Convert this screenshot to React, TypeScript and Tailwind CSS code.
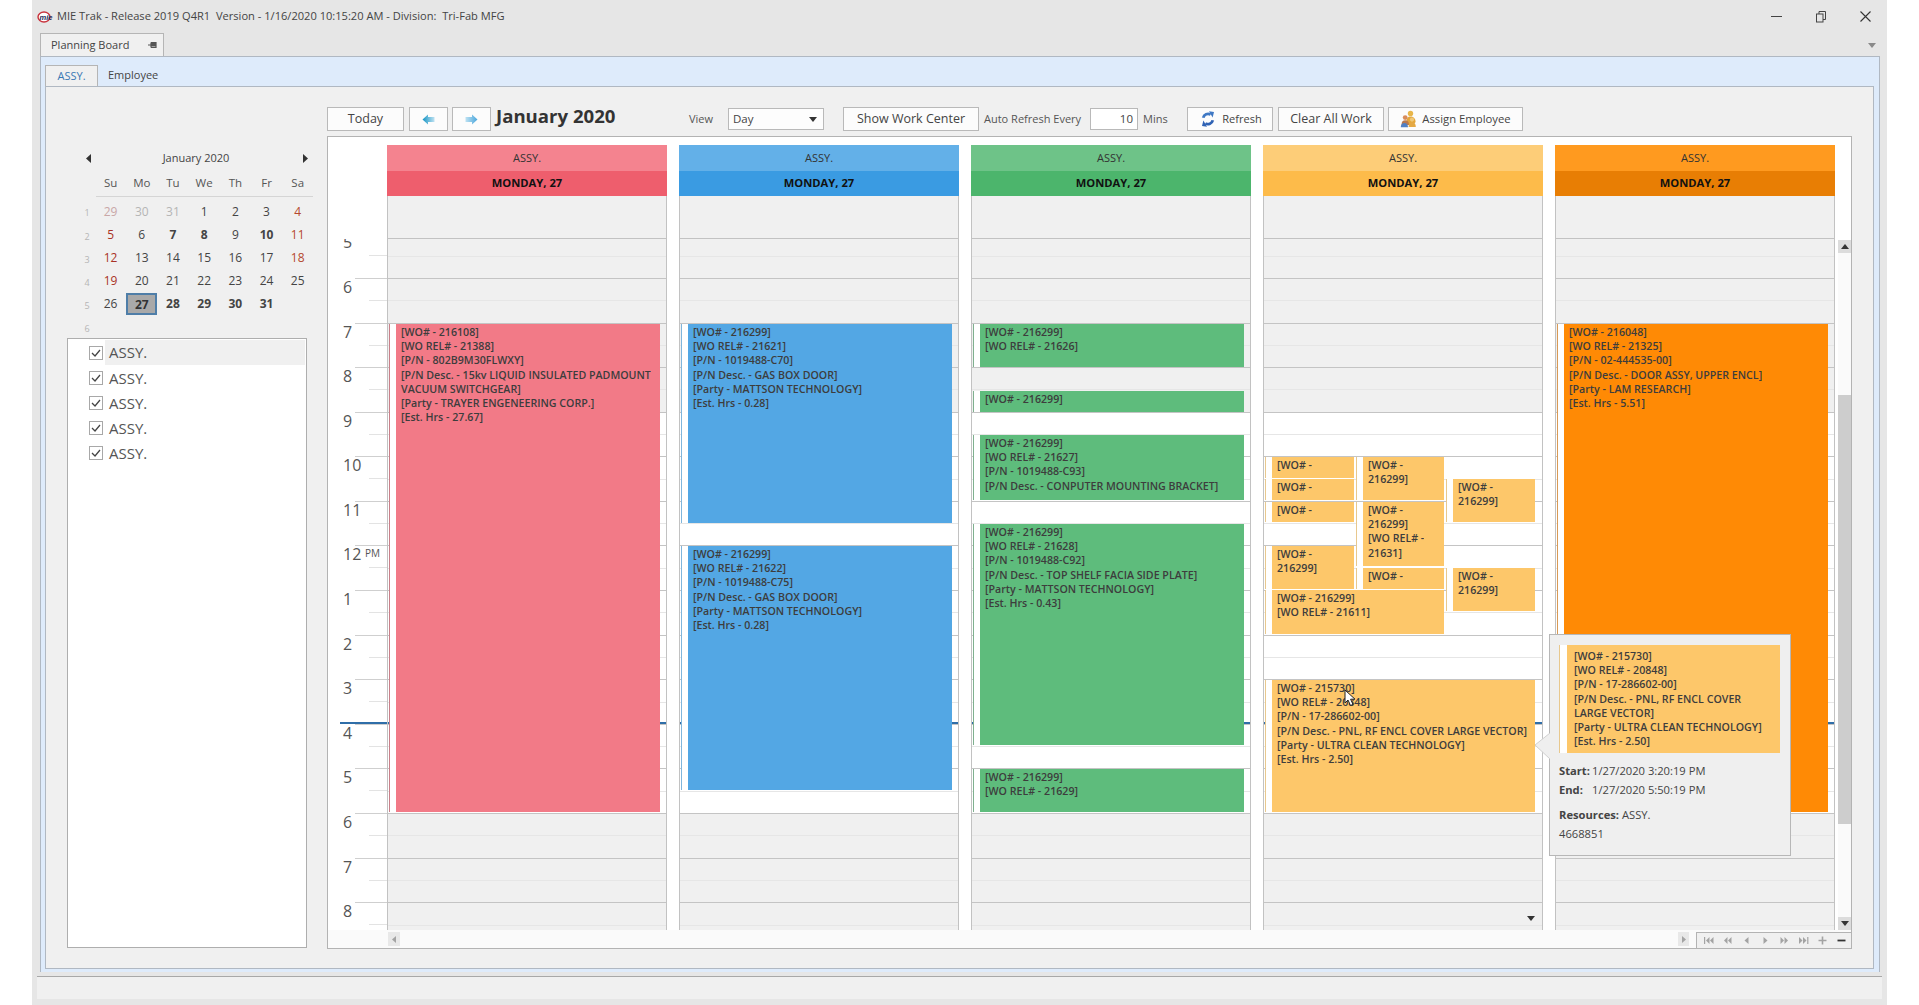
import type { ReactNode } from "react";

const ORIGIN = 239; // top of the scrolling day grid, as the events count it
const FONT = "font-['Open_Sans',sans-serif]";

type Ev = { y1: number; y2: number; x1?: number; x2?: number; lines: string[] };

const COLS: { light: string; dark: string; ev: string; strip: string; x2: number; events: Ev[] }[] = [
  {
    light: "bg-[#f4838f]",
    dark: "bg-[#ee5e6d]",
    ev: "bg-[#f27a87]",
    strip: "border-[#c9808a]",
    x2: 272,
    events: [
      {
        y1: 324,
        y2: 812,
        lines: [
          "[WO# - 216108]",
          "[WO REL# - 21388]",
          "[P/N - 802B9M30FLWXY]",
          "[P/N Desc. - 15kv LIQUID INSULATED PADMOUNT",
          "VACUUM SWITCHGEAR]",
          "[Party - TRAYER ENGENEERING CORP.]",
          "[Est. Hrs - 27.67]",
        ],
      },
    ],
  },
  {
    light: "bg-[#63b0e8]",
    dark: "bg-[#3a9be2]",
    ev: "bg-[#53a7e4]",
    strip: "border-[#7fb5dc]",
    x2: 272,
    events: [
      {
        y1: 324,
        y2: 523,
        lines: ["[WO# - 216299]", "[WO REL# - 21621]", "[P/N - 1019488-C70]", "[P/N Desc. - GAS BOX DOOR]", "[Party - MATTSON TECHNOLOGY]", "[Est. Hrs - 0.28]"],
      },
      {
        y1: 546,
        y2: 790,
        lines: ["[WO# - 216299]", "[WO REL# - 21622]", "[P/N - 1019488-C75]", "[P/N Desc. - GAS BOX DOOR]", "[Party - MATTSON TECHNOLOGY]", "[Est. Hrs - 0.28]"],
      },
    ],
  },
  {
    light: "bg-[#6ec388]",
    dark: "bg-[#4cb56c]",
    ev: "bg-[#5ebc7c]",
    strip: "border-[#7fb08f]",
    x2: 272,
    events: [
      { y1: 324, y2: 367, lines: ["[WO# - 216299]", "[WO REL# - 21626]"] },
      { y1: 391, y2: 412, lines: ["[WO# - 216299]"] },
      { y1: 435, y2: 500, lines: ["[WO# - 216299]", "[WO REL# - 21627]", "[P/N - 1019488-C93]", "[P/N Desc. - CONPUTER MOUNTING BRACKET]"] },
      {
        y1: 524,
        y2: 745,
        lines: ["[WO# - 216299]", "[WO REL# - 21628]", "[P/N - 1019488-C92]", "[P/N Desc. - TOP SHELF FACIA SIDE PLATE]", "[Party - MATTSON TECHNOLOGY]", "[Est. Hrs - 0.43]"],
      },
      { y1: 769, y2: 812, lines: ["[WO# - 216299]", "[WO REL# - 21629]"] },
    ],
  },
  {
    light: "bg-[#fdcd78]",
    dark: "bg-[#fdbb4a]",
    ev: "bg-[#fdc76a]",
    strip: "border-[#e8c88e]",
    x2: 271,
    events: [
      { y1: 457, y2: 478, x1: 1, x2: 90, lines: ["[WO# -"] },
      { y1: 479, y2: 500, x1: 1, x2: 90, lines: ["[WO# -"] },
      { y1: 502, y2: 522, x1: 1, x2: 90, lines: ["[WO# -"] },
      { y1: 546, y2: 589, x1: 1, x2: 90, lines: ["[WO# -", "216299]"] },
      { y1: 457, y2: 500, x1: 92, x2: 180, lines: ["[WO# -", "216299]"] },
      { y1: 502, y2: 566, x1: 92, x2: 180, lines: ["[WO# -", "216299]", "[WO REL# -", "21631]"] },
      { y1: 568, y2: 589, x1: 92, x2: 180, lines: ["[WO# -"] },
      { y1: 479, y2: 522, x1: 182, x2: 271, lines: ["[WO# -", "216299]"] },
      { y1: 568, y2: 611, x1: 182, x2: 271, lines: ["[WO# -", "216299]"] },
      { y1: 590, y2: 634, x1: 1, x2: 180, lines: ["[WO# - 216299]", "[WO REL# - 21611]"] },
      {
        y1: 680,
        y2: 812,
        lines: ["[WO# - 215730]", "[WO REL# - 20848]", "[P/N - 17-286602-00]", "[P/N Desc. - PNL, RF ENCL COVER LARGE VECTOR]", "[Party - ULTRA CLEAN TECHNOLOGY]", "[Est. Hrs - 2.50]"],
      },
    ],
  },
  {
    light: "bg-[#ff9a1f]",
    dark: "bg-[#e87e04]",
    ev: "bg-[#ff8a05]",
    strip: "border-[#d99a55]",
    x2: 272,
    events: [
      {
        y1: 324,
        y2: 812,
        lines: ["[WO# - 216048]", "[WO REL# - 21325]", "[P/N - 02-444535-00]", "[P/N Desc. - DOOR ASSY, UPPER ENCL]", "[Party - LAM RESEARCH]", "[Est. Hrs - 5.51]"],
      },
    ],
  },
];

const HOURS: { label: string; hour: number }[] = [
  { label: "5", hour: 5 },
  { label: "6", hour: 6 },
  { label: "7", hour: 7 },
  { label: "8", hour: 8 },
  { label: "9", hour: 9 },
  { label: "10", hour: 10 },
  { label: "11", hour: 11 },
  { label: "12", hour: 12 },
  { label: "1", hour: 13 },
  { label: "2", hour: 14 },
  { label: "3", hour: 15 },
  { label: "4", hour: 16 },
  { label: "5", hour: 17 },
  { label: "6", hour: 18 },
  { label: "7", hour: 19 },
  { label: "8", hour: 20 },
];

const CAL_ROWS: { wk: string; days: { d: string; c?: string }[] }[] = [
  {
    wk: "1",
    days: [
      { d: "29", c: "text-[#c9a7a7]" },
      { d: "30", c: "text-[#b5b5b5]" },
      { d: "31", c: "text-[#b5b5b5]" },
      { d: "1" },
      { d: "2" },
      { d: "3" },
      { d: "4", c: "text-[#b5482e]" },
    ],
  },
  {
    wk: "2",
    days: [
      { d: "5", c: "text-[#a93226]" },
      { d: "6" },
      { d: "7", c: "font-bold" },
      { d: "8", c: "font-bold" },
      { d: "9" },
      { d: "10", c: "font-bold" },
      { d: "11", c: "text-[#b5482e]" },
    ],
  },
  {
    wk: "3",
    days: [
      { d: "12", c: "text-[#a93226]" },
      { d: "13" },
      { d: "14" },
      { d: "15" },
      { d: "16" },
      { d: "17" },
      { d: "18", c: "text-[#b5482e]" },
    ],
  },
  {
    wk: "4",
    days: [
      { d: "19", c: "text-[#a93226]" },
      { d: "20" },
      { d: "21" },
      { d: "22" },
      { d: "23" },
      { d: "24" },
      { d: "25" },
    ],
  },
  {
    wk: "5",
    days: [
      { d: "26" },
      { d: "27", c: "font-bold" },
      { d: "28", c: "font-bold" },
      { d: "29", c: "font-bold" },
      { d: "30", c: "font-bold" },
      { d: "31", c: "font-bold" },
      { d: "" },
    ],
  },
  { wk: "6", days: [] },
];

function Logo() {
  return (
    <svg width="16" height="12" viewBox="0 0 16 12" className="shrink-0">
      <ellipse cx="7" cy="6" rx="6" ry="5" fill="#fff" stroke="#c8323c" strokeWidth="1.4" />
      <text x="2.5" y="8.6" fontSize="7.5" fontWeight="700" fontStyle="italic" fill="#1c2f5c" fontFamily="Liberation Sans">
        mie
      </text>
    </svg>
  );
}

function Arrow({ dir }: { dir: "left" | "right" }) {
  const id = dir === "left" ? "arrow-l" : "arrow-r";
  return (
    <svg width="13" height="11" viewBox="0 0 13 11" className={dir === "left" ? "" : "rotate-180"}>
      <defs>
        <linearGradient id={id} x1="0" x2="1" y1="0" y2="0">
          <stop offset="0" stopColor={dir === "left" ? "#1594c4" : "#4aa6dc"} />
          <stop offset="1" stopColor="#bfe2f2" />
        </linearGradient>
      </defs>
      <path d="M0.5 5.5 L6 0.5 V3 H12.5 V8 H6 V10.5 Z" fill={`url(#${id})`} />
    </svg>
  );
}

function RefreshIcon() {
  return (
    <svg width="14" height="16" viewBox="0 0 14 16">
      <path d="M2.2 6.8 A5 5 0 0 1 9.6 3.6" fill="none" stroke="#3f78c4" strokeWidth="2.8" />
      <path d="M8 0.2 L13 1 L11.6 6.4 Z" fill="#3f78c4" />
      <path d="M11.8 9.2 A5 5 0 0 1 4.4 12.4" fill="none" stroke="#2f62b4" strokeWidth="2.8" />
      <path d="M6 15.8 L1 15 L2.4 9.6 Z" fill="#2f62b4" />
    </svg>
  );
}

function PeopleIcon() {
  return (
    <svg width="17" height="18" viewBox="0 0 17 18">
      <circle cx="10.5" cy="3.4" r="2.7" fill="#e8b64a" />
      <path d="M6.5 12 C6.5 8 8 6.4 10.5 6.4 C14 6.4 15.6 9 15.6 12 L13 15 H8 Z" fill="#e3a63a" />
      <circle cx="5.2" cy="7.6" r="2.4" fill="#d98c5a" />
      <path d="M1.5 15 C1.5 11.6 3 10.2 5.2 10.2 C7.8 10.2 9 12 9 15 Z" fill="#b9794e" />
      <circle cx="12" cy="9.6" r="2.1" fill="#f0c879" />
      <path d="M8.6 17 C8.6 13.6 10 12.2 12 12.2 C14.6 12.2 15.8 14 15.8 17 Z" fill="#e4a945" />
      <path d="M0.8 17.2 C0.8 14.4 2.4 13 4.4 13 C6.8 13 8 14.8 8 17.2 Z" fill="#4f7fc4" />
    </svg>
  );
}

function NavIcon({ kind, dark }: { kind: string; dark?: boolean }) {
  const c = dark ? "#333" : "#a3a3a3";
  const left = "M4.5 1 L0.5 4.5 L4.5 8 Z";
  const right = "M0.5 1 L4.5 4.5 L0.5 8 Z";
  const shapes: Record<string, ReactNode> = {
    first: (
      <>
        <rect x="0" y="1" width="1.2" height="7" fill={c} />
        <path d="M5.5 1 L2 4.5 L5.5 8 Z" fill={c} />
        <path d="M9.5 1 L6 4.5 L9.5 8 Z" fill={c} />
      </>
    ),
    prevPage: (
      <>
        <path d="M4.5 1 L1 4.5 L4.5 8 Z" fill={c} />
        <path d="M8.5 1 L5 4.5 L8.5 8 Z" fill={c} />
      </>
    ),
    prev: <path d={left} transform="translate(2 0)" fill={c} />,
    next: <path d={right} transform="translate(2 0)" fill={c} />,
    nextPage: (
      <>
        <path d="M0.5 1 L4 4.5 L0.5 8 Z" fill={c} />
        <path d="M4.5 1 L8 4.5 L4.5 8 Z" fill={c} />
      </>
    ),
    last: (
      <>
        <path d="M0 1 L3.5 4.5 L0 8 Z" fill={c} />
        <path d="M4 1 L7.5 4.5 L4 8 Z" fill={c} />
        <rect x="8.2" y="1" width="1.2" height="7" fill={c} />
      </>
    ),
    plus: <path d="M0.5 4.5 H8.5 M4.5 0.5 V8.5" stroke={c} strokeWidth="1.6" />,
    minus: <path d="M0.5 4.5 H8.5" stroke={c} strokeWidth="1.8" />,
  };
  return (
    <svg width="10" height="9" viewBox="0 0 10 9">
      {shapes[kind]}
    </svg>
  );
}

function ToolButton({ className, children }: { className: string; children: ReactNode }) {
  return (
    <div className={`h-[24px] flex items-center justify-center border border-[#b9b9b9] bg-[#fcfcfc] text-[#444] ${className}`}>
      {children}
    </div>
  );
}

function Toolbar() {
  return (
    <div className="h-[24px] flex items-center">
      <ToolButton className="w-[77px] text-[12.5px]">Today</ToolButton>
      <ToolButton className="w-[39px] ml-[5px]">
        <Arrow dir="left" />
      </ToolButton>
      <ToolButton className="w-[39px] ml-[4px]">
        <Arrow dir="right" />
      </ToolButton>
      <div className="w-[193px] ml-[5px] text-[18.6px] font-bold text-[#333] leading-[24px] -mt-[7px]">January 2020</div>
      <div className="w-[39px] text-[11px] text-[#555]">View</div>
      <div className="w-[96px] h-[22px] flex items-center justify-between border border-[#b9b9b9] bg-[#fdfdfd] pl-[4px] pr-[6px] text-[11.5px] text-[#444]">
        Day
        <svg width="8" height="5" viewBox="0 0 8 5">
          <path d="M0 0 H8 L4 5 Z" fill="#333" />
        </svg>
      </div>
      <ToolButton className="w-[136px] ml-[19px] text-[12.5px]">Show Work Center</ToolButton>
      <div className="w-[106px] ml-[5px] text-[11px] text-[#555] whitespace-nowrap">Auto Refresh Every</div>
      <div className="w-[48px] h-[22px] flex items-center justify-end border border-[#b9b9b9] bg-white pr-[4px] text-[11.5px] text-[#444]">10</div>
      <div className="w-[44px] ml-[5px] text-[11px] text-[#555]">Mins</div>
      <ToolButton className="w-[86px] text-[11px] gap-[7px] pl-[3px]">
        <RefreshIcon />
        Refresh
      </ToolButton>
      <ToolButton className="w-[106px] ml-[5px] text-[12.5px]">Clear All Work</ToolButton>
      <ToolButton className="w-[135px] ml-[4px] text-[11.3px] gap-[5px]">
        <PeopleIcon />
        Assign Employee
      </ToolButton>
    </div>
  );
}

function MiniCalendar() {
  return (
    <div className="ml-[8px] w-[240px] text-[#444]">
      <div className="h-[16px] flex items-center justify-between pl-[11px] pr-[5px] mr-[2px]">
        <svg width="5" height="9" viewBox="0 0 5 9">
          <path d="M5 0 V9 L0 4.5 Z" fill="#333" />
        </svg>
        <span className="text-[11px] -ml-[2px]">January 2020</span>
        <svg width="5" height="9" viewBox="0 0 5 9">
          <path d="M0 0 V9 L5 4.5 Z" fill="#333" />
        </svg>
      </div>
      <div className="mt-[8px] h-[16px] grid grid-cols-[20px_repeat(7,31.2px)] items-center text-center text-[11.5px] text-[#555]">
        <span />
        {["Su", "Mo", "Tu", "We", "Th", "Fr", "Sa"].map((d) => (
          <span key={d}>{d}</span>
        ))}
      </div>
      <div className="ml-[21px] w-[217px] mt-[6px] h-px bg-[#d5d5d5]" />
      <div className="mt-[3px]">
        {CAL_ROWS.map((row) => (
          <div key={row.wk} className="h-[23.2px] grid grid-cols-[20px_repeat(7,31.2px)] items-center text-center text-[12px]">
            <span className="text-[9px] text-[#b5b5b5] pl-[4px] pt-[3px]">{row.wk}</span>
            {row.days.map((day, i) =>
              day.d === "27" ? (
                <span
                  key={i}
                  className="h-[22px] leading-[20px] border-2 border-[#4f7ea8] bg-[#a9a9a9] font-bold text-[#333]"
                >
                  {day.d}
                </span>
              ) : (
                <span key={i} className={day.c}>
                  {day.d}
                </span>
              ),
            )}
          </div>
        ))}
      </div>
    </div>
  );
}

function CheckList() {
  return (
    <div className="w-[240px] h-[610px] -mt-[1px] border border-[#aeaeae] bg-white pt-[1px]">
      {[0, 1, 2, 3, 4].map((i) => (
        <div key={i} className="h-[25.1px] flex items-center pl-[21px]">
          <div className="w-[14px] h-[14px] border border-[#a8a8a8] flex items-center justify-center">
            <svg width="10" height="8" viewBox="0 0 10 8">
              <path d="M1 4 L4 7 L9 1" fill="none" stroke="#444" strokeWidth="1.3" />
            </svg>
          </div>
          <div className={`flex-1 h-full flex items-center ml-[2px] mr-[1px] pl-[4px] text-[15px] text-[#555] ${i === 0 ? "bg-[#f0f0f0]" : ""}`}>
            ASSY.
          </div>
        </div>
      ))}
    </div>
  );
}

function EventText({ lines }: { lines: string[] }) {
  return (
    <div className="pl-[5px] pt-[1px] text-[10.65px] leading-[14.2px] font-semibold text-[#3d3d3d] whitespace-nowrap overflow-hidden">
      {lines.map((l, i) => (
        <div key={i}>{l}</div>
      ))}
    </div>
  );
}

function EventBlock({ ev, bg, strip, x2 }: { ev: Ev; bg: string; strip: string; x2: number }) {
  const left = ev.x1 ?? 1;
  const right = ev.x2 ?? x2;
  return (
    <div
      className={`absolute z-10 flex ${bg}`}
      style={{ top: ev.y1 - ORIGIN, height: ev.y2 - ev.y1, left, width: right - left }}
    >
      <div className={`w-[7px] shrink-0 bg-white border-l ${strip}`} />
      <EventText lines={ev.lines} />
    </div>
  );
}

function DayColumn({ col }: { col: (typeof COLS)[number] }) {
  return (
    <div className="relative w-[280px] border-x border-[#c2c2c2] -mt-[5.7px]">
      {HOURS.map((h) => (
        <div
          key={h.hour}
          className={`h-[44.6px] border-t border-[#c4c4c4] flex flex-col ${h.hour >= 9 && h.hour < 18 ? "bg-white" : "bg-[#f0f0f0]"}`}
        >
          <div className="flex-1 border-b border-[#e6e6e6]" />
          <div className="flex-1" />
        </div>
      ))}
      <div className="mt-[-1px] h-[44.6px] bg-[#f0f0f0] border-t border-[#c4c4c4]" />
      <div className="absolute left-0 right-0 h-[2px] bg-[#2f6ea8] top-[488.7px]" />
      <div className="absolute left-0 top-[5.7px] w-full">
        {col.events.map((ev, i) => (
          <EventBlock key={i} ev={ev} bg={col.ev} strip={col.strip} x2={col.x2} />
        ))}
      </div>
    </div>
  );
}

function TimeRuler() {
  return (
    <div className="relative w-[59px] shrink-0 -mt-[5.7px]">
      {HOURS.map((h) => (
        <div key={h.hour} className="relative h-[44.6px]">
          <div className="absolute top-0 left-[27px] right-0 h-px bg-[#cfcfcf]" />
          <div className="absolute top-[22px] left-[41px] right-0 h-px bg-[#e3e3e3]" />
          <div className="pl-[15px] text-[16px] leading-[19px] text-[#555]">
            {h.label}
            {h.hour === 12 && <span className="absolute left-[37px] top-[1px] text-[10px] leading-[14px]">PM</span>}
          </div>
        </div>
      ))}
      <div className="absolute left-[12px] right-0 h-[2px] bg-[#2f6ea8] top-[488.7px]" />
    </div>
  );
}

function VScroll() {
  return (
    <div className="w-[13px] ml-[3px] mt-[1px] flex flex-col bg-[#fafafa]">
      <div className="h-[13px] bg-[#dcdcdc] flex items-center justify-center">
        <svg width="8" height="5" viewBox="0 0 8 5">
          <path d="M0 5 H8 L4 0 Z" fill="#333" />
        </svg>
      </div>
      <div className="h-[142px]" />
      <div className="h-[429px] bg-[#cdcdcd]" />
      <div className="flex-1" />
      <div className="h-[13px] bg-[#dcdcdc] flex items-center justify-center">
        <svg width="8" height="5" viewBox="0 0 8 5">
          <path d="M0 0 H8 L4 5 Z" fill="#333" />
        </svg>
      </div>
    </div>
  );
}

function Popup() {
  return (
    <div className="absolute left-[1221px] top-[497px] w-[242px] h-[222px] z-20 border border-[#b7b7b7] bg-[#efefef] pl-[9px] pt-[10px]">
      <svg width="15" height="26" viewBox="0 0 15 26" className="absolute left-[-15px] top-[98px]">
        <path d="M15 0 L0 12 L15 26 Z" fill="#efefef" />
        <path d="M15 0 L0 12 L15 26" fill="none" stroke="#d0d0d0" />
      </svg>
      <div className="w-[221px] h-[108px] flex bg-[#fdc76a]">
        <div className="w-[8px] shrink-0 bg-white border-l border-[#e8c88e]" />
        <div className="pl-[7px] pt-[4px] text-[10.65px] leading-[14.2px] font-semibold text-[#3d3d3d] whitespace-nowrap">
          <div>[WO# - 215730]</div>
          <div>[WO REL# - 20848]</div>
          <div>[P/N - 17-286602-00]</div>
          <div>[P/N Desc. - PNL, RF ENCL COVER</div>
          <div>LARGE VECTOR]</div>
          <div>[Party - ULTRA CLEAN TECHNOLOGY]</div>
          <div>[Est. Hrs - 2.50]</div>
        </div>
      </div>
      <div className="mt-[8px] text-[11.2px] leading-[19px] text-[#444]">
        <div className="flex">
          <span className="w-[33px] font-bold">Start:</span>1/27/2020 3:20:19 PM
        </div>
        <div className="flex">
          <span className="w-[33px] font-bold">End:</span>1/27/2020 5:50:19 PM
        </div>
        <div className="mt-[6px]">
          <span className="font-bold">Resources:</span> ASSY.
        </div>
        <div>4668851</div>
      </div>
    </div>
  );
}

function Scheduler() {
  return (
    <div className="relative mt-[5px] h-[813px] w-[1525px] border border-[#b3b3b3] bg-white flex flex-col">
      <div className="h-[102px] pt-[8px] pl-[59px] flex gap-[12px]">
        {COLS.map((col, i) => (
          <div key={i} className="w-[280px] flex flex-col">
            <div className={`h-[26px] flex items-center justify-center text-[11px] text-[#333] ${col.light}`}>ASSY.</div>
            <div className={`h-[25px] flex items-center justify-center text-[11.2px] font-bold text-[#111] ${col.dark}`}>MONDAY, 27</div>
            <div className="flex-1 bg-[#f0f0f0] border-x border-b border-[#c2c2c2]" />
          </div>
        ))}
      </div>
      <div className="h-[691px] flex overflow-hidden">
        <TimeRuler />
        <div className="flex gap-[12px] items-start">
          {COLS.map((col, i) => (
            <DayColumn key={i} col={col} />
          ))}
        </div>
        <VScroll />
      </div>
      <div className="flex-1 bg-[#fafafa] flex items-stretch pl-[60px]">
        <div className="w-[12px] my-[2px] bg-[#e8e8e8] flex items-center justify-center">
          <svg width="4" height="7" viewBox="0 0 4 7">
            <path d="M4 0 V7 L0 3.5 Z" fill="#a3a3a3" />
          </svg>
        </div>
        <div className="flex-1" />
        <div className="w-[11px] my-[2px] bg-[#e8e8e8] flex items-center justify-center">
          <svg width="4" height="7" viewBox="0 0 4 7">
            <path d="M0 0 V7 L4 3.5 Z" fill="#a3a3a3" />
          </svg>
        </div>
        <div className="w-[155px] ml-[7px] mt-[2px] bg-[#f0f0f0] border-l border-t border-[#b3b3b3] flex items-center justify-around pl-[2px]">
          <NavIcon kind="first" />
          <NavIcon kind="prevPage" />
          <NavIcon kind="prev" />
          <NavIcon kind="next" />
          <NavIcon kind="nextPage" />
          <NavIcon kind="last" />
          <NavIcon kind="plus" />
          <NavIcon kind="minus" dark />
        </div>
      </div>
      <div className="absolute left-[1199px] top-[779px] z-10">
        <svg width="8" height="5" viewBox="0 0 8 5">
          <path d="M0 0 H8 L4 5 Z" fill="#333" />
        </svg>
      </div>
      <Popup />
      <svg width="12" height="18" viewBox="0 0 12 18" className="absolute left-[1016px] top-[552px] z-30">
        <path d="M1 1 V14 L4 11 L6.5 16.5 L9 15.4 L6.6 10.2 H11 Z" fill="#fff" stroke="#222" strokeWidth="1" />
      </svg>
    </div>
  );
}

export default function App() {
  return (
    <div className={`w-[1919px] h-[1005px] bg-white overflow-hidden ${FONT}`}>
      <div className="ml-[32px] w-[1855px] h-full bg-[#e6e6e6] flex flex-col">
        <div className="h-[33px] flex items-center pl-[5px] pr-[16px]">
          <Logo />
          <span className="ml-[4px] text-[11.1px] text-[#444] whitespace-pre">
            MIE Trak - Release 2019 Q4R1  Version - 1/16/2020 10:15:20 AM - Division:  Tri-Fab MFG
          </span>
          <div className="ml-auto flex items-center gap-[34px]">
            <div className="w-[11px] h-px bg-[#444]" />
            <svg width="10" height="12" viewBox="0 0 10 12">
              <rect x="0.5" y="3" width="6.5" height="8" fill="none" stroke="#444" />
              <path d="M3 3 V0.5 H9.5 V8.5 H7" fill="none" stroke="#444" />
            </svg>
            <svg width="11" height="11" viewBox="0 0 11 11">
              <path d="M0.5 0.5 L10.5 10.5 M10.5 0.5 L0.5 10.5" stroke="#333" strokeWidth="1.1" />
            </svg>
          </div>
        </div>
        <div className="h-[23px] flex items-stretch pl-[8px] pr-[11px]">
          <div className="w-[124px] flex items-center justify-between pl-[10px] pr-[6px] bg-[#f0f0f0] border-x border-t border-[#b5b5b5] text-[11px] text-[#444]">
            Planning Board
            <svg width="9" height="8" viewBox="0 0 9 8">
              <path d="M0 4 H3 M3 1.5 V6.5 M3 1.5 H8 V6.5 H3" fill="none" stroke="#555" strokeWidth="1.2" />
              <rect x="3" y="1.5" width="5" height="4" fill="#555" />
            </svg>
          </div>
          <svg width="8" height="5" viewBox="0 0 8 5" className="ml-auto mt-[10px]">
            <path d="M0 0 H8 L4 5 Z" fill="#8a8a8a" />
          </svg>
        </div>
        <div className="ml-[8px] w-[1840px] h-[916px] bg-[#deebfb] border-x border-t border-[#b0b8c2] pl-[4px] pr-[5px] pt-[8px]">
          <div className="h-[21px] flex items-stretch text-[11px]">
            <div className="w-[53px] flex items-center justify-center bg-[#f0f0f0] border-x border-t border-[#b5b5b5] text-[#3a78b5]">ASSY.</div>
            <div className="pl-[10px] flex items-center text-[#444]">Employee</div>
          </div>
          <div className="h-[883px] flex border border-[#b0b8c2] bg-[#f0f0f0]">
            <div className="w-[281px] pl-[21px] pt-[63px] shrink-0">
              <MiniCalendar />
              <CheckList />
            </div>
            <div className="pt-[20px]">
              <Toolbar />
              <Scheduler />
            </div>
          </div>
        </div>
        <div className="mt-[4px] ml-[5px] w-[1845px] h-[23px] bg-[#f0f0f0] border-t border-[#a8a8a8]" />
      </div>
    </div>
  );
}
